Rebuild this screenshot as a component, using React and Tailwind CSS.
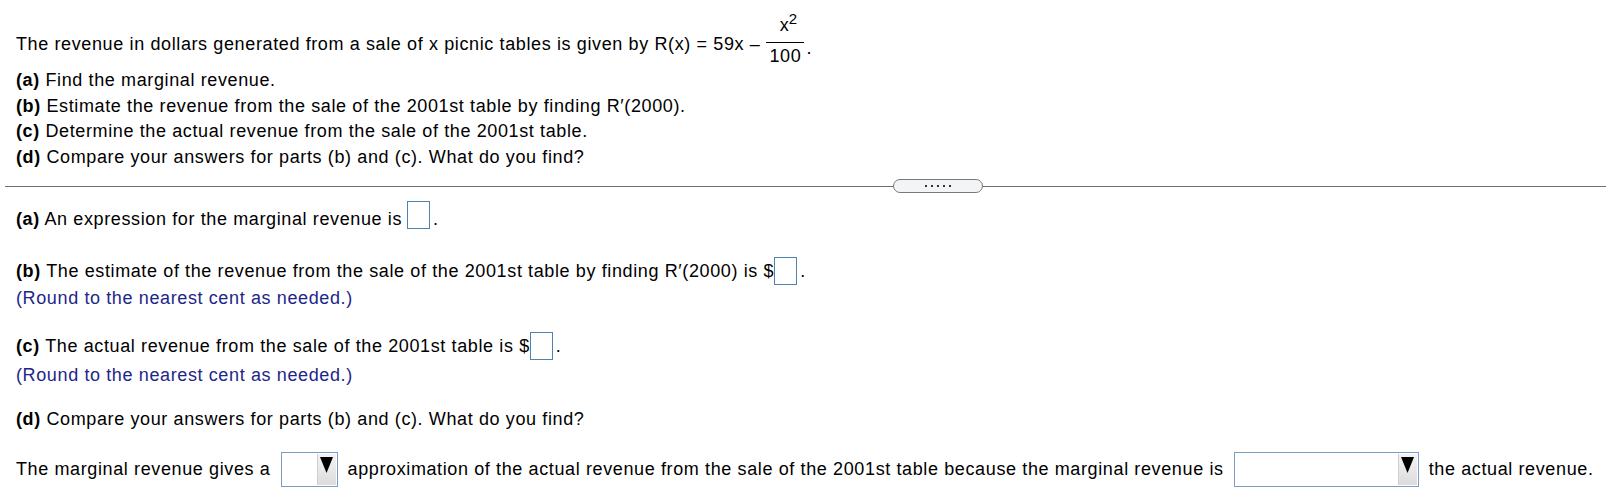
import React from 'react'

const font = { fontFamily: '"Liberation Sans", Arial, sans-serif' }

function AnswerBox() {
  return <span className="inline-block w-[23px] h-[28px] border border-[#4f83ad] bg-white" />
}

function Dropdown({ width }) {
  return (
    <span className={`inline-flex h-[35px] border border-[#7d9cc4] bg-white ${width}`}>
      <span className="flex-1" />
      <span className="w-[19px] my-[1px] mr-[1px] bg-gradient-to-b from-[#f4f4f4] to-[#dcdcdc] border-l border-[#cfcfcf] flex items-start justify-center pt-[3px]">
        <svg width="13" height="16" viewBox="0 0 13 16">
          <polygon points="0,0 13,0 6.5,16" fill="#000" />
        </svg>
      </span>
    </span>
  )
}

export default function App() {
  return (
    <div className="w-[1609px] h-[502px] bg-white text-black text-[18px] tracking-[0.62px] overflow-hidden" style={font}>
      {/* question */}
      <div className="pl-[16px] pt-[31px]">
        <div className="flex items-center h-[26px] leading-[26px] whitespace-nowrap">
          <span>The revenue in dollars generated from a sale of x picnic tables is given by R(x) = 59x –</span>
          <span className="inline-flex flex-col items-center ml-[6px] mb-[8px]">
            <span className="leading-[20px] h-[20px] pl-[6px] tracking-normal">
              x<sup className="text-[15px] relative -top-[7px]">2</sup>
            </span>
            <span className="w-[38px] h-px bg-black mt-[7px] mb-[3px]" />
            <span className="leading-[20px] h-[20px]">100</span>
          </span>
          <span className="ml-[2px] mt-[8px]">.</span>
        </div>
        <div className="mt-[11px] leading-[25.6px]">
          <div><b>(a)</b> Find the marginal revenue.</div>
          <div><b>(b)</b> Estimate the revenue from the sale of the 2001st table by finding R′(2000).</div>
          <div><b>(c)</b> Determine the actual revenue from the sale of the 2001st table.</div>
          <div><b>(d)</b> Compare your answers for parts (b) and (c). What do you find?</div>
        </div>
      </div>

      {/* divider */}
      <div className="mt-[9px] h-[14px] flex items-center pl-[5px] pr-[3px]">
        <div className="w-[888px] h-px bg-[#707070]" />
        <div className="w-[90px] h-[14px] rounded-full border border-[#7a7a7a] bg-[#f3f4f6] flex items-center justify-center gap-[4px]">
          {[0, 1, 2, 3, 4].map(i => (
            <span key={i} className="w-[2px] h-[2px] bg-[#333]" />
          ))}
        </div>
        <div className="flex-1 h-px bg-[#707070]" />
      </div>

      {/* answers */}
      <div className="pl-[16px] whitespace-nowrap">
        <div className="mt-[12px] flex items-center h-[28px]">
          <span><b>(a)</b> An expression for the marginal revenue is</span>
          <span className="ml-[5px]"><AnswerBox /></span>
          <span className="ml-[3px]">.</span>
        </div>

        <div className="mt-[24px] flex items-center h-[28px]">
          <span><b>(b)</b> The estimate of the revenue from the sale of the 2001st table by finding R′(2000) is $</span>
          <AnswerBox />
          <span className="ml-[3px]">.</span>
        </div>
        <div className="leading-[26px] text-[#1c2689]">(Round to the nearest cent as needed.)</div>

        <div className="mt-[21px] flex items-center h-[28px]">
          <span><b>(c)</b> The actual revenue from the sale of the 2001st table is $</span>
          <AnswerBox />
          <span className="ml-[3px]">.</span>
        </div>
        <div className="mt-[2px] leading-[26px] text-[#1c2689]">(Round to the nearest cent as needed.)</div>

        <div className="mt-[18px] leading-[26px]"><b>(d)</b> Compare your answers for parts (b) and (c). What do you find?</div>

        <div className="mt-[20px] flex items-center h-[35px] gap-[10px]">
          <span>The marginal revenue gives a</span>
          <Dropdown width="w-[57px]" />
          <span>approximation of the actual revenue from the sale of the 2001st table because the marginal revenue is</span>
          <Dropdown width="w-[185px]" />
          <span>the actual revenue.</span>
        </div>
      </div>
    </div>
  )
}
